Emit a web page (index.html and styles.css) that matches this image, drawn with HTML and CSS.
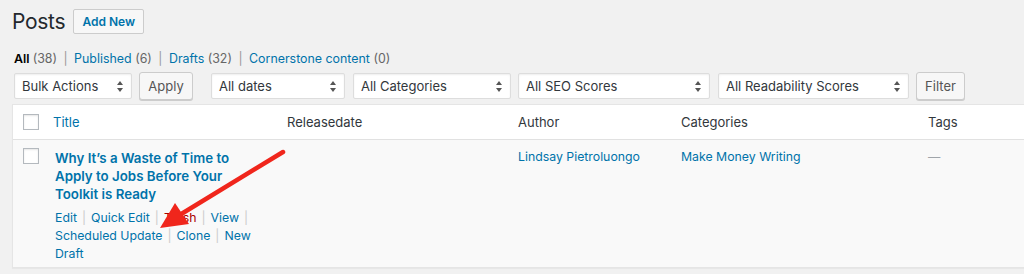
FILE: index.html
```html
<!DOCTYPE html>
<html>
<head>
<meta charset="utf-8">
<link rel="stylesheet" href="styles.css">
</head>
<body>
<div class="wrap">
  <div class="heading">
    <h1>Posts</h1>
    <a class="add-new">Add New</a>
  </div>
  <ul class="subsubsub">
    <li class="current">All <span class="count">(38)</span></li>
    <li class="sep">|</li>
    <li><a>Published</a> <span class="count">(6)</span></li>
    <li class="sep">|</li>
    <li><a>Drafts</a> <span class="count">(32)</span></li>
    <li class="sep">|</li>
    <li><a>Cornerstone content</a> <span class="count">(0)</span></li>
  </ul>
  <div class="tablenav">
    <div class="select w-bulk">Bulk Actions<span class="arrows"></span></div>
    <div class="btn w-apply">Apply</div>
    <div class="select w-dates">All dates<span class="arrows"></span></div>
    <div class="select w-cats">All Categories<span class="arrows"></span></div>
    <div class="select w-seo">All SEO Scores<span class="arrows"></span></div>
    <div class="select w-read">All Readability Scores<span class="arrows"></span></div>
    <div class="btn w-filter">Filter</div>
  </div>
  <div class="table">
    <div class="row head">
      <div class="c-cb"><span class="cb"></span></div>
      <div class="c-title"><a>Title</a></div>
      <div class="c-date">Releasedate</div>
      <div class="c-author">Author</div>
      <div class="c-cats">Categories</div>
      <div class="c-tags">Tags</div>
    </div>
    <div class="row body">
      <div class="c-cb"><span class="cb"></span></div>
      <div class="c-title">
        <a class="post-title">Why It’s a Waste of Time to Apply to Jobs Before Your Toolkit is Ready</a>
        <div class="actions"><a class="nw">Edit</a><span class="bar">|</span><a class="nw">Quick Edit</a><span class="bar">|</span><a class="nw trash">Trash</a><span class="bar">|</span><a class="nw">View</a><span class="bar">|</span> <a class="nw">Scheduled Update</a><span class="bar">|</span><a class="nw">Clone</a><span class="bar">|</span><a>New Draft</a></div>
      </div>
      <div class="c-date"></div>
      <div class="c-author"><a>Lindsay Pietroluongo</a></div>
      <div class="c-cats"><a>Make Money Writing</a></div>
      <div class="c-tags"><span class="dash">—</span></div>
    </div>
  </div>
</div>
<svg class="arrow" width="1024" height="274" viewBox="0 0 1024 274">
  <line x1="283" y1="152" x2="178" y2="216" stroke="#f0261c" stroke-width="4.5" stroke-linecap="round"/>
  <polygon points="160,228 175,203 189,224" fill="#f0261c"/>
</svg>
</body>
</html>
```

FILE: styles.css
```css
html, body {
  margin: 0;
  padding: 0;
  background: #f1f1f1;
  overflow: hidden;
  width: 1024px;
  height: 274px;
}
body {
  font-family: "Inter", "Liberation Sans", sans-serif;
  font-size: 13px;
  color: #444;
  position: relative;
}
a { color: #0073aa; text-decoration: none; }
.wrap {
  padding: 9px 0 0 12px;
}
.heading {
  display: flex;
  align-items: center;
  height: 25px;
}
h1 {
  font-size: 21px;
  font-weight: 400;
  color: #23282d;
  margin: 0;
  line-height: 25px;
  letter-spacing: -0.3px;
}
.add-new {
  margin-left: 8px;
  box-sizing: border-box;
  height: 25px;
  line-height: 23px;
  width: 71px;
  text-align: center;
  border: 1px solid #ccc;
  border-radius: 2px;
  background: #f7f7f7;
  font-weight: 600;
  font-size: 12px;
  color: #0073aa;
}
.subsubsub {
  list-style: none;
  margin: 17px 0 0 2px;
  padding: 0;
  display: flex;
  font-size: 12.4px;
  line-height: 16px;
  color: #666;
}
.subsubsub li { white-space: pre; }
.subsubsub .current { color: #000; font-weight: 600; }
.subsubsub .current .count { font-weight: 400; color: #666; }
.subsubsub .sep { padding: 0 6.5px; color: #999; }
.tablenav {
  display: flex;
  align-items: center;
  margin-top: 5px;
  height: 28px;
  margin-left: 2px;
}
.select {
  box-sizing: border-box;
  height: 26px;
  border: 1px solid #ddd;
  background: #fff;
  box-shadow: inset 0 1px 2px rgba(0,0,0,0.07);
  padding-left: 7px;
  line-height: 24px;
  font-size: 13px;
  color: #32373c;
  position: relative;
  border-radius: 2px;
}
.arrows {
  position: absolute;
  right: 7px;
  top: 7px;
  width: 7px;
  height: 11px;
}
.arrows::before, .arrows::after {
  content: "";
  position: absolute;
  left: 0;
  border-left: 3.5px solid transparent;
  border-right: 3.5px solid transparent;
}
.arrows::before { top: 0; border-bottom: 4px solid #555; }
.arrows::after { bottom: 0; border-top: 4px solid #555; }
.btn {
  box-sizing: border-box;
  height: 28px;
  line-height: 26px;
  border: 1px solid #ccc;
  background: #f7f7f7;
  box-shadow: 0 1px 0 #ccc;
  border-radius: 3px;
  text-align: center;
  color: #555;
  font-size: 13px;
}
.w-bulk { width: 118px; }
.w-apply { width: 54px; margin-left: 7px; }
.w-dates { width: 134px; margin-left: 18px; }
.w-cats { width: 158px; margin-left: 8px; }
.w-seo { width: 192px; margin-left: 7px; }
.w-read { width: 191px; margin-left: 8px; }
.w-filter { width: 49px; margin-left: 7px; }
.table {
  margin-top: 4px;
  width: 1040px;
  border: 1px solid #e5e5e5;
  background: #fff;
  box-shadow: 0 1px 1px rgba(0,0,0,0.04);
}
.row {
  display: flex;
}
.row.head {
  height: 34px;
  border-bottom: 1px solid #e1e1e1;
  align-items: center;
  font-size: 13px;
  color: #32373c;
}
.row.body {
  background: #f9f9f9;
  height: 127px;
  font-size: 12.3px;
}
.row > div { box-sizing: border-box; padding: 0 10px; }
.c-cb { width: 30px; padding: 0 !important; display: flex; }
.cb {
  display: block;
  box-sizing: border-box;
  width: 16px;
  height: 16px;
  border: 1px solid #b4b9be;
  background: #fff;
  box-shadow: inset 0 1px 2px rgba(0,0,0,0.1);
  margin-left: 10px;
}
.row.body .cb { margin-top: 8px; }
.c-title { width: 234px; }
.c-date { width: 231px; }
.c-author { width: 163px; }
.c-cats { width: 247px; }
.c-tags { width: 120px; }
.row.body > div:not(.c-cb) { padding-top: 9px; }
.row.body .c-title { padding-left: 12px; }
.post-title {
  display: block;
  font-weight: 600;
  font-size: 13.3px;
  line-height: 18px;
  width: 185px;
}
.actions {
  margin-top: 6px;
  line-height: 18px;
  font-size: 12.3px;
  width: 192px;
}
.actions .nw { white-space: nowrap; }
.actions .bar { color: #ccc; padding: 0 5px; }
.actions .trash { color: #a00; }
.dash { color: #a0a5aa; }
.arrow {
  position: absolute;
  left: 0;
  top: 0;
}
```
